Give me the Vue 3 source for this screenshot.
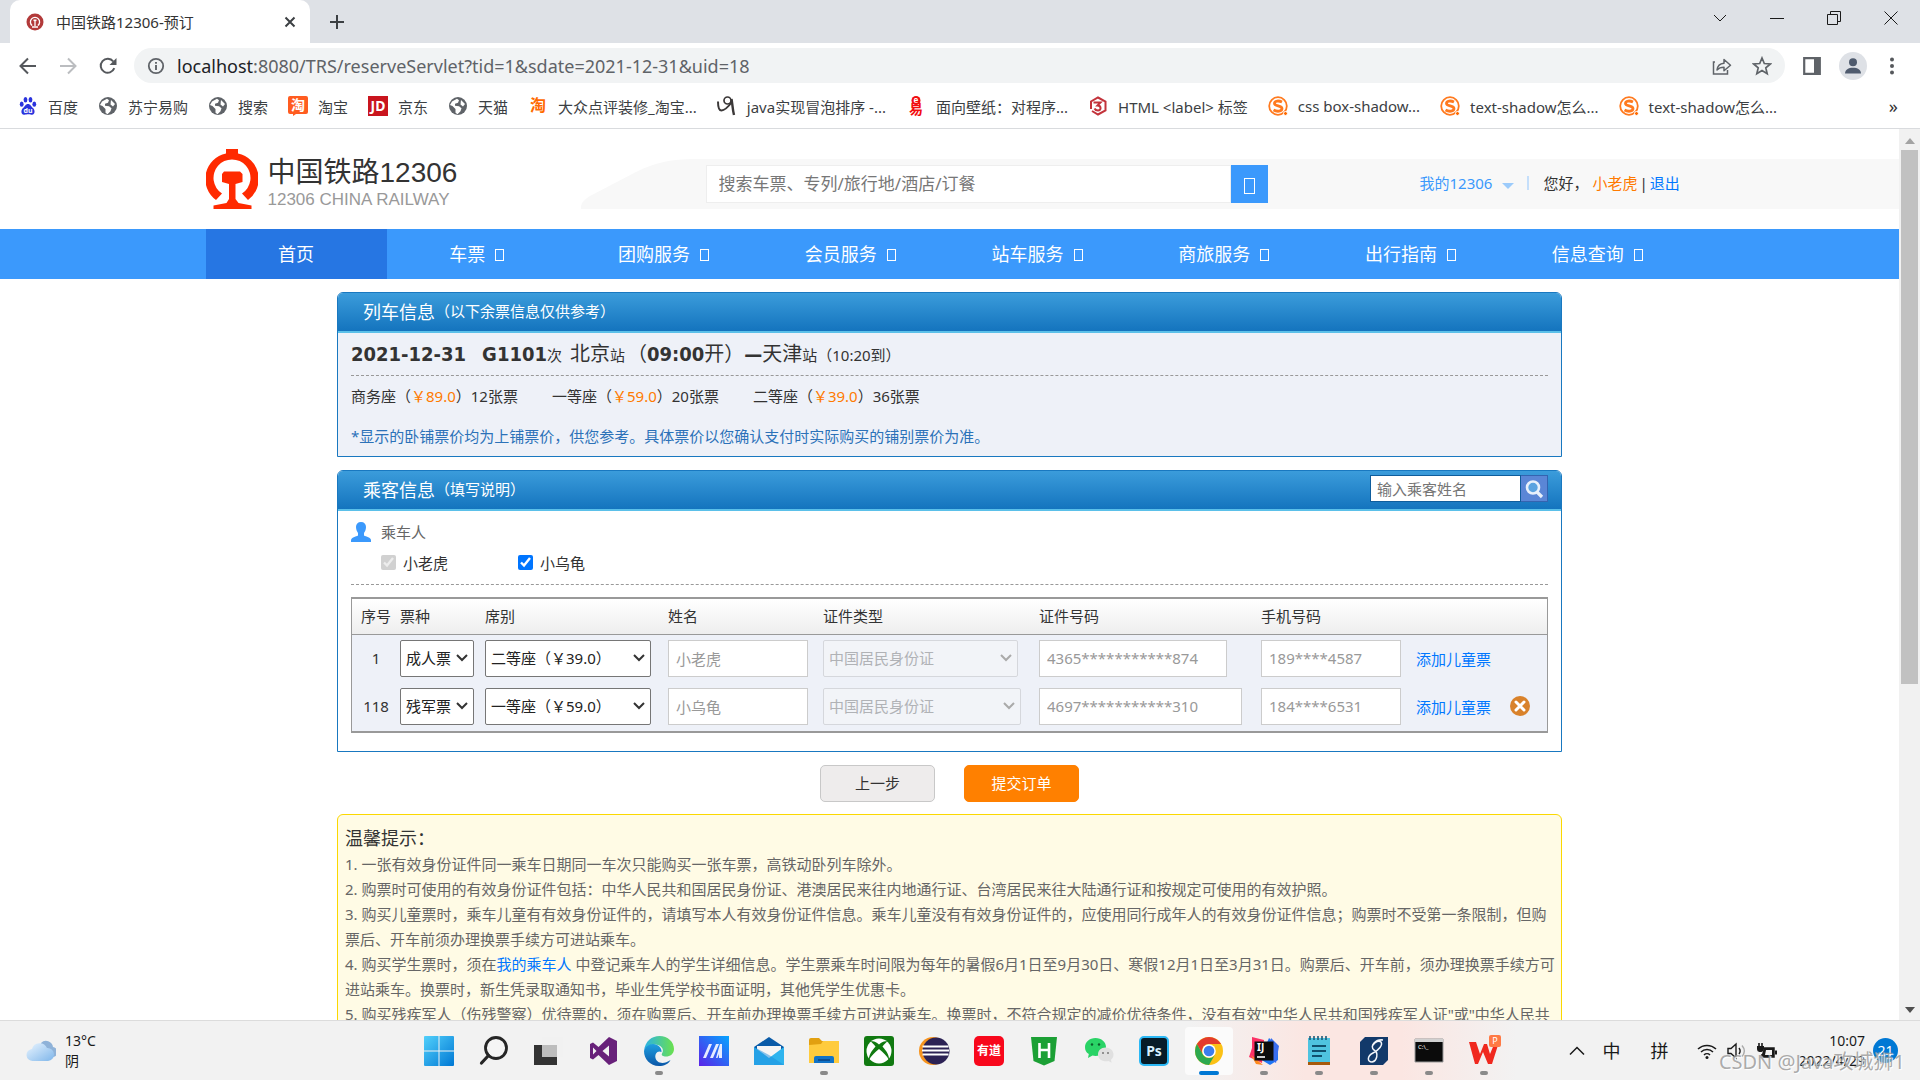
<template>
  <div class="screen">
    <!-- browser -->
    <header class="chrome">
      <div class="tab-strip">
        <div class="tab">
          <svg class="favicon" viewBox="0 0 18 18">
            <circle cx="9" cy="9" r="8.5" fill="#b23a3a" />
            <path d="M6.2 12.6A4.6 4.6 0 1 1 11.8 12.6M9 7v6M6 14h6" fill="none" stroke="#fff" stroke-width="1.3" />
            <path d="M7.5 6.5h3v1.6h-3z" fill="#fff" />
          </svg>
          <span class="tab-title">中国铁路12306-预订</span>
          <button class="plain" aria-label="关闭标签页">
            <svg width="12" height="12" viewBox="0 0 12 12"><path d="M1.5 1.5l9 9M10.5 1.5l-9 9" stroke="#3c4043" stroke-width="2" /></svg>
          </button>
        </div>
        <button class="plain new-tab" aria-label="新标签页">
          <svg width="16" height="16" viewBox="0 0 16 16"><path d="M8 1v14M1 8h14" stroke="#3c4043" stroke-width="2" /></svg>
        </button>
        <div class="window-buttons">
          <button class="plain" aria-label="搜索标签页"><svg width="14" height="14" viewBox="0 0 14 14"><path d="M1 4l6 6 6-6" class="thin" /></svg></button>
          <button class="plain" aria-label="最小化"><svg width="14" height="14" viewBox="0 0 14 14"><path d="M0 7.5h14" class="thin" /></svg></button>
          <button class="plain" aria-label="还原"><svg width="14" height="14" viewBox="0 0 14 14"><path d="M.5 3.5h10v10H.5zM3.5 3.5v-3h10v10h-3" class="thin" /></svg></button>
          <button class="plain" aria-label="关闭"><svg width="14" height="14" viewBox="0 0 14 14"><path d="M.5.5l13 13M13.5.5l-13 13" class="thin" /></svg></button>
        </div>
      </div>

      <div class="toolbar">
        <div class="nav-buttons">
          <button class="plain" aria-label="后退"><svg width="18" height="18" viewBox="0 0 18 18"><path d="M17 9H2M9 1.5L1.5 9 9 16.5" fill="none" stroke="#55585c" stroke-width="2" /></svg></button>
          <button class="plain" aria-label="前进"><svg width="18" height="18" viewBox="0 0 18 18"><path d="M1 9h15M9 1.5L16.5 9 9 16.5" fill="none" stroke="#bbbdc0" stroke-width="2" /></svg></button>
          <button class="plain" aria-label="重新加载">
            <svg width="18" height="18" viewBox="0 0 18 18">
              <path d="M15.3 11.2A7 7 0 1 1 14.3 4.5" fill="none" stroke="#55585c" stroke-width="2" />
              <path d="M17.5 1v7h-7z" fill="#55585c" />
            </svg>
          </button>
        </div>
        <div class="address">
          <svg width="18" height="18" viewBox="0 0 18 18">
            <circle cx="9" cy="9" r="7.2" fill="none" stroke="#5f6368" stroke-width="1.8" />
            <path d="M9 8v5M9 5v1.8" stroke="#5f6368" stroke-width="1.9" />
          </svg>
          <span class="url"><b>localhost</b>:8080/TRS/reserveServlet?tid=1&amp;sdate=2021-12-31&amp;uid=18</span>
          <svg class="share" width="20" height="20" viewBox="0 0 20 20">
            <path d="M3 6H1.5v12h14v-4" fill="none" stroke="#5f6368" stroke-width="1.5" />
            <path d="M5 14c.5-4 3-6.500 7-6.800V3.500l6.500 5.800-6.500 5.500v-3.500c-3 0-5.200.7-7 2.700z" fill="none" stroke="#5f6368" stroke-width="1.5" stroke-linejoin="round" />
          </svg>
          <svg width="20" height="20" viewBox="0 0 20 20">
            <path d="M10 2l2.300 5.500 6 .5-4.500 3.900 1.400 5.900L10 14.600l-5.200 3.200 1.400-5.900L1.700 8l6-.5z" fill="none" stroke="#5f6368" stroke-width="1.7" />
          </svg>
        </div>
        <svg width="18" height="18" viewBox="0 0 18 18"><path d="M1.2 1.2h15.6v15.6H1.2z" fill="#fff" stroke="#5f6368" stroke-width="2.2" /><path d="M11 1h6v16h-6z" fill="#5f6368" /></svg>
        <svg class="avatar" width="28" height="28" viewBox="0 0 28 28"><circle cx="14" cy="14" r="14" fill="#dee1e6" /><circle cx="14" cy="10.2" r="4" fill="#4f5b6e" /><path d="M6 21.500c0-4 3.500-5.800 8-5.800s8 1.800 8 5.800z" fill="#4f5b6e" /></svg>
        <svg class="dots" width="6" height="18" viewBox="0 0 6 18"><g fill="#55585c"><circle cx="3" cy="2.500" r="2" /><circle cx="3" cy="9" r="2" /><circle cx="3" cy="15.500" r="2" /></g></svg>
      </div>

      <nav class="bookmarks">
        <a v-for="(b, i) in bookmarks" :key="i" href="#">
          <svg width="20" height="20" viewBox="0 0 20 20">
            <g v-if="b.icon === 'baidu'" fill="#2a33dd">
              <ellipse cx="3.7" cy="8.2" rx="1.9" ry="2.6" /><ellipse cx="7.5" cy="3.7" rx="1.9" ry="2.7" />
              <ellipse cx="12.5" cy="3.7" rx="1.9" ry="2.7" /><ellipse cx="16.3" cy="8.2" rx="1.9" ry="2.6" />
              <path d="M10 8c2.500 0 3 2.500 5 4s2.500 6.500-1 6.700c-2 .1-2.500-.4-4-.4s-2 .5-4 .4C2.500 18.500 3 13.500 5 12s2.500-4 5-4z" />
              <text x="10" y="16.500" font-size="7" font-weight="bold" text-anchor="middle" fill="#fff">du</text>
            </g>
            <g v-else-if="b.icon === 'globe'">
              <circle cx="10" cy="10" r="9" fill="#5f6368" />
              <path d="M4 5.500l5-2.800 2 1.600-1 2.500-3 1v2l4 .5 2.500 2-1 3-3 3-2-1.500V13L4.500 10 2 9z" fill="#fff" />
              <path d="M13 4l4 4-2 2.500-2.500-2z" fill="#fff" />
            </g>
            <g v-else-if="b.icon === 'taobao'">
              <path d="M2 0h16a2 2 0 0 1 2 2v14a2 2 0 0 1-2 2H8l-3 2v-2H2a2 2 0 0 1-2-2V2a2 2 0 0 1 2-2z" fill="#ff5c20" />
              <text x="10" y="14" font-size="14" font-weight="bold" text-anchor="middle" fill="#fff">淘</text>
            </g>
            <g v-else-if="b.icon === 'jd'">
              <path d="M0 0h20v20H0z" fill="#c9151e" />
              <text x="10" y="15" font-size="14" font-weight="bold" text-anchor="middle" fill="#fff">JD</text>
            </g>
            <text v-else-if="b.icon === 'tao'" x="10" y="15" font-size="16" font-weight="bold" text-anchor="middle" fill="#ff6a00">淘</text>
            <g v-else-if="b.icon === 'java'" fill="none" stroke="#3b3838">
              <circle cx="10.5" cy="4.5" r="3.5" stroke-width="1.7" />
              <path d="M1 5.500c0 6 1 9 3.500 9 3.500 0 7-4 10.500-8.500" stroke-width="2" />
              <path d="M14.500 3c1 5 1 10 2.500 16" stroke-width="2.400" />
            </g>
            <g v-else-if="b.icon === 'yi'">
              <circle cx="10" cy="4.500" r="4.500" fill="#f20d0d" />
              <text x="10" y="7" font-size="8" font-weight="bold" text-anchor="middle" fill="#fff">e</text>
              <text x="10" y="18" font-size="14" font-weight="bold" text-anchor="middle" fill="#f20d0d">易</text>
            </g>
            <g v-else-if="b.icon === 'w3'" fill="none" stroke="#c3333b" stroke-width="2">
              <path d="M3 13V5.500l7-4 7.500 4v9l-7.500 4-6-3.500" />
              <path d="M5.500 6.500h7l-3 3c4 0 4 5 .5 5-2 0-3-1-3.500-2" />
            </g>
            <g v-else>
              <circle cx="10" cy="10" r="8.800" fill="none" stroke="#ff7a1f" stroke-width="1.800" />
              <path d="M14 6C11 4.500 6.500 4.500 6.500 7.500s7.500 1.800 7.500 5-5 3.500-8.500 1.500" fill="none" stroke="#ff7a1f" stroke-width="2.800" />
              <circle cx="17.500" cy="17.500" r="2" fill="#ff6a00" stroke="#fff" />
            </g>
          </svg>
          <span>{{ b.text }}</span>
        </a>
        <button class="plain more" aria-label="更多书签">»</button>
      </nav>
    </header>

    <!-- web page -->
    <div class="viewport">
      <div class="page">
        <div class="site-header">
          <div class="logo">
            <svg width="52" height="60" viewBox="0 0 52 60">
              <path d="M20 0h12v4.500A26 26 0 0 1 42 51l-6-6.500A18.500 18.500 0 1 0 16 44.500L10 51A26 26 0 0 1 20 4.500z" fill="#ff2a00" />
              <path d="M18 22.500h16l2.500 2.500v8l-7 2v15l3 4 13 2.500V60h-38v-3.500l13-2.500 2.500-4V35l-7-2v-8z" fill="#ff2a00" />
            </svg>
            <div>
              <div class="logo-cn">中国铁路12306</div>
              <div class="logo-en">12306 CHINA RAILWAY</div>
            </div>
          </div>
          <div class="header-band">
            <svg class="train-nose" width="125" height="50" viewBox="0 0 125 50"><path d="M0 50v-2c0-4 4-8 9-11L55 13C75 3 92 0 112 0h13v50z" fill="#f8f8f8" /></svg>
            <form class="band-fill" @submit.prevent>
              <input v-model="keyword" class="site-search" aria-label="搜索" placeholder="搜索车票、专列/旅行地/酒店/订餐" />
              <button class="site-search-btn" aria-label="搜索"><i class="tofu tofu-big"></i></button>
              <div class="user">
                <a class="my" href="#">我的12306<i class="caret"></i></a>
                <span class="bar"></span>
                <span>您好，</span><a class="name" href="#">小老虎</a><span class="sep">|</span><a class="logout" href="#">退出</a>
              </div>
            </form>
          </div>
        </div>

        <nav class="main-nav">
          <ul>
            <li class="active"><a href="#">首页</a></li>
            <li v-for="m in menus" :key="m"><a href="#">{{ m }}<i class="tofu"></i></a></li>
          </ul>
        </nav>

        <main>
          <section class="panel train">
            <h2>列车信息<small>（以下余票信息仅供参考）</small></h2>
            <div class="panel-body">
              <p class="train-line">
                <strong class="date">2021-12-31</strong><strong>G1101</strong>次<em class="from">北京</em>站<em class="depart">（</em><strong>09:00</strong><em>开）</em><strong>—</strong><em>天津</em>站（10:20到）
              </p>
              <p class="seats">
                <span v-for="s in seats" :key="s.name">{{ s.name }}（<span class="price">￥{{ s.price }}</span>）{{ s.left }}张票</span>
              </p>
              <p class="note">*显示的卧铺票价均为上铺票价，供您参考。具体票价以您确认支付时实际购买的铺别票价为准。</p>
            </div>
          </section>

          <section class="panel">
            <h2>
              乘客信息<small>（填写说明）</small>
              <span class="passenger-search">
                <input v-model="passengerName" aria-label="乘客姓名" placeholder="输入乘客姓名" />
                <button aria-label="查找乘客">
                  <svg width="20" height="20" viewBox="0 0 20 20"><circle cx="9" cy="8.500" r="6" fill="#5ba3e0" stroke="#e8f0fb" stroke-width="2.600" /><path d="M13 13l5 5" stroke="#e8f0fb" stroke-width="3.200" /></svg>
                </button>
              </span>
            </h2>
            <div class="panel-body">
              <div class="rider-title">
                <svg width="20" height="20" viewBox="0 0 20 20"><path d="M10 0c3.200 0 5 2 5 5 0 2.500-1 4.500-2 6v2.500c2 1.300 7 1.500 7 5V20H0v-1.500c0-3.500 5-3.700 7-5V11C6 9.500 5 7.500 5 5c0-3 1.800-5 5-5z" fill="#3b99fc" /></svg>
                乘车人
              </div>
              <div class="riders">
                <label><input type="checkbox" checked disabled />小老虎</label>
                <label><input v-model="turtle" type="checkbox" />小乌龟</label>
              </div>

              <table>
                <thead>
                  <tr>
                    <th class="c-no">序号</th>
                    <th class="c-ticket">票种</th>
                    <th class="c-seat">席别</th>
                    <th class="c-name">姓名</th>
                    <th class="c-type">证件类型</th>
                    <th class="c-id">证件号码</th>
                    <th class="c-phone">手机号码</th>
                    <th class="c-add"></th>
                    <th></th>
                  </tr>
                </thead>
                <tbody>
                  <tr v-for="r in rows" :key="r.no" :class="{ wide: r.removable }">
                    <td class="c-no">{{ r.no }}</td>
                    <td><select v-model="r.ticket" class="s-ticket" aria-label="票种"><option>成人票</option><option>残军票</option></select></td>
                    <td><select v-model="r.seat" class="s-seat" aria-label="席别"><option>一等座（￥59.0）</option><option>二等座（￥39.0）</option></select></td>
                    <td><input class="i-short" aria-label="姓名" :value="r.name" readonly /></td>
                    <td><select class="s-type" aria-label="证件类型" disabled><option>中国居民身份证</option></select></td>
                    <td><input class="i-id" aria-label="证件号码" :value="r.id" readonly /></td>
                    <td><input class="i-short" aria-label="手机号码" :value="r.phone" readonly /></td>
                    <td><a href="#">添加儿童票</a></td>
                    <td>
                      <button v-if="r.removable" class="plain remove" aria-label="删除">
                        <svg width="20" height="20" viewBox="0 0 20 20"><circle cx="10" cy="10" r="10" fill="#d9822b" /><path d="M6 6l8 8M14 6l-8 8" stroke="#fff" stroke-width="3" stroke-linecap="round" /></svg>
                      </button>
                    </td>
                  </tr>
                </tbody>
              </table>
            </div>
          </section>

          <div class="actions">
            <button class="prev">上一步</button>
            <button class="submit">提交订单</button>
          </div>

          <section class="tips">
            <h3>温馨提示：</h3>
            <p>1. 一张有效身份证件同一乘车日期同一车次只能购买一张车票，高铁动卧列车除外。</p>
            <p>2. 购票时可使用的有效身份证件包括：中华人民共和国居民身份证、港澳居民来往内地通行证、台湾居民来往大陆通行证和按规定可使用的有效护照。</p>
            <p>3. 购买儿童票时，乘车儿童有有效身份证件的，请填写本人有效身份证件信息。乘车儿童没有有效身份证件的，应使用同行成年人的有效身份证件信息；购票时不受第一条限制，但购票后、开车前须办理换票手续方可进站乘车。</p>
            <p>4. 购买学生票时，须在<a href="#">我的乘车人</a> 中登记乘车人的学生详细信息。学生票乘车时间限为每年的暑假6月1日至9月30日、寒假12月1日至3月31日。购票后、开车前，须办理换票手续方可进站乘车。换票时，新生凭录取通知书，毕业生凭学校书面证明，其他凭学生优惠卡。</p>
            <p>5. 购买残疾军人（伤残警察）优待票的，须在购票后、开车前办理换票手续方可进站乘车。换票时，不符合规定的减价优待条件，没有有效"中华人民共和国残疾军人证"或"中华人民共</p>
          </section>
        </main>
      </div>
      <div class="scrollbar">
        <i class="up"></i>
        <i class="thumb"></i>
        <i class="down"></i>
      </div>
    </div>

    <!-- windows taskbar -->
    <footer class="taskbar">
      <div class="weather">
        <svg width="30" height="26" viewBox="0 0 30 26">
          <defs><linearGradient id="cloud" x1="0" y1="0" x2="1" y2="1"><stop offset="0" stop-color="#eaf5ff" /><stop offset="1" stop-color="#7fb6ea" /></linearGradient></defs>
          <path d="M15 5a7 7 0 0 1 12 4 5 5 0 0 1-1 10H15z" fill="#8fb2d8" />
          <path d="M7 23a6 6 0 0 1-1-12 8 8 0 0 1 15-1 6.500 6.500 0 0 1 1 13z" fill="url(#cloud)" />
        </svg>
        <div>13°C<br />阴</div>
      </div>

      <div class="apps">
        <button aria-label="开始">
          <svg viewBox="0 0 30 30"><defs><linearGradient id="win" x1="0" y1="0" x2="1" y2="1"><stop offset="0" stop-color="#52d0fb" /><stop offset="1" stop-color="#0078d4" /></linearGradient></defs><path d="M0 1a1 1 0 0 1 1-1h13.500v14.500H0zM15.500 0H29a1 1 0 0 1 1 1v13.500H15.500zM0 15.500h14.500V30H1a1 1 0 0 1-1-1zM15.500 15.500H30V29a1 1 0 0 1-1 1H15.500z" fill="url(#win)" /></svg>
        </button>
        <button aria-label="搜索">
          <svg viewBox="0 0 30 30"><circle cx="17" cy="12" r="10.500" fill="#f5f5f5" stroke="#262626" stroke-width="2.800" /><path d="M9.500 19.500L2.500 27" stroke="#262626" stroke-width="3.200" stroke-linecap="round" /></svg>
        </button>
        <button aria-label="任务视图">
          <svg viewBox="0 0 30 30"><path d="M0 9h23v20H0z" fill="#333" /><path d="M8 1h21v20H8z" fill="#f1f1f1" /><path d="M8 9h15v12H8z" fill="#bdbdbd" /></svg>
        </button>
        <button aria-label="Visual Studio">
          <svg viewBox="0 0 30 30"><path d="M20 1l8 4v20l-8 4L9.500 19 4 23.500 1 22V8l3-1.500L9.500 11zM4 11.500v7L7.500 15zM20 9.500L13.500 15l6.500 5.500z" fill="#68217a" fill-rule="evenodd" /></svg>
        </button>
        <button class="open" aria-label="Edge">
          <svg viewBox="0 0 30 30">
            <defs>
              <linearGradient id="edgeA" x1="0" y1="0" x2="1" y2="0"><stop offset="0" stop-color="#2ab1e8" /><stop offset="1" stop-color="#6be14d" /></linearGradient>
              <linearGradient id="edgeB" x1="0" y1="0" x2="0" y2="1"><stop offset="0" stop-color="#1f9fe0" /><stop offset="1" stop-color="#0b57a8" /></linearGradient>
            </defs>
            <path d="M0 15C1 5 8 0 15.500 0 24 0 30 6 30 13c0 5-4 7.500-8 7.500-3 0-5-1-4-3 3-5-2-9-7-9C5 8.500 1 12 0 15z" fill="url(#edgeA)" />
            <path d="M0 15c1-4 5-7 9-7 5 0 9 4 8.500 8-4-2-7 2-6 6 1 5 8 7 15 2-2 4-6.500 6-11.500 6C6 30 0 23 0 15z" fill="url(#edgeB)" />
          </svg>
        </button>
        <button aria-label="MyASUS">
          <svg viewBox="0 0 30 30"><defs><linearGradient id="asus" x1="0" y1="1" x2="1" y2="0"><stop offset="0" stop-color="#5b22e8" /><stop offset="1" stop-color="#05a5ff" /></linearGradient></defs><path d="M0 0h30v30H0z" fill="url(#asus)" /><path d="M4 22L10 8h3L7 22zM11 22l6-14h3l-6 14zM17 22l4-14h2v14h-3v-4l-1.500 4z" fill="#e6ecff" /></svg>
        </button>
        <button aria-label="邮件">
          <svg viewBox="0 0 30 30"><path d="M0 11L15 1l15 10v3H0z" fill="#0a5ba8" /><path d="M3 10h24v10H3z" fill="#f5f5f5" /><path d="M0 11l15 11 15-11v18H0z" fill="#2fb4ee" /><path d="M15 19L30 29H0V11z" fill="#1c8ede" opacity=".5" /></svg>
        </button>
        <button class="open" aria-label="文件资源管理器">
          <svg viewBox="0 0 30 30"><path d="M0 4a2 2 0 0 1 2-2h8l3 3h15v8H0z" fill="#e2a010" /><path d="M0 9l12-1 2-3h16v22H0z" fill="#ffcb3d" /><path d="M5 27v-5a2 2 0 0 1 2-2h16a2 2 0 0 1 2 2v5z" fill="#1173c7" /><path d="M9 23h12v2H9z" fill="#0b4f94" /></svg>
        </button>
        <button aria-label="Xbox">
          <svg viewBox="0 0 30 30"><rect width="30" height="30" rx="3" fill="#117a11" /><circle cx="15" cy="15" r="12.500" fill="#fff" /><path d="M6.500 5.500c3-1 6 .5 8.500 3 2.500-2.500 5.500-4 8.500-3 -1.500 1-3 2.500-5 5 4 4.500 7 9 6.500 13.500C23 20 19 16 15 13c-4 3-8 7-10 11C4.500 19.500 7.500 15 11.500 10.500c-2-2.500-3.500-4-5-5z" fill="#117a11" /></svg>
        </button>
        <button aria-label="Eclipse">
          <svg viewBox="0 0 30 30"><circle cx="14" cy="15" r="14" fill="#f7941e" /><circle cx="17" cy="15" r="13.500" fill="#2c2255" /><path d="M3.500 10.500h26M3 14.500h27M3.500 18.500h26" stroke="#fff" stroke-width="1.800" /></svg>
        </button>
        <button aria-label="有道">
          <svg viewBox="0 0 30 30"><rect width="30" height="30" rx="5" fill="#f8081c" /><text x="15" y="19" font-size="12" font-weight="bold" fill="#fff" text-anchor="middle">有道</text></svg>
        </button>
        <button aria-label="HBuilder">
          <svg viewBox="0 0 30 30"><path d="M2 1h26l-2.500 24L15 29.500 4.500 25z" fill="#1ca035" /><path d="M10.500 7v15M20 7v15M10.500 14h9.500" stroke="#fff" stroke-width="2.600" /></svg>
        </button>
        <button aria-label="微信">
          <svg viewBox="0 0 30 30"><path d="M11.500 2C17.500 2 22 6 22 11s-4.500 9-10.500 9l-3-.4L4 22l.8-4C2 16.500 1 14 1 11c0-5 4.500-9 10.500-9z" fill="#2ad366" /><circle cx="8" cy="8.500" r="1.200" fill="#0b5c2a" /><circle cx="15" cy="8.500" r="1.200" fill="#0b5c2a" /><path d="M21.500 11.500c4.500 0 8 3 8 7 0 2.500-1 4-2.500 5.200l.5 3-3-1.600c-6 1-10.500-2-10.500-6.600 0-4 3-7 7.500-7z" fill="#e0e0e0" /><circle cx="19" cy="17" r="1" fill="#777" /><circle cx="24" cy="17" r="1" fill="#777" /></svg>
        </button>
        <button aria-label="Photoshop">
          <svg viewBox="0 0 30 30"><rect x="1" y="1" width="28" height="28" rx="4" fill="#071c28" stroke="#2bb8f5" stroke-width="2" /><text x="15" y="20" font-size="14" font-weight="bold" fill="#d5efff" text-anchor="middle">Ps</text></svg>
        </button>
        <button class="current" aria-label="Chrome">
          <svg viewBox="0 0 30 30">
            <circle cx="15" cy="15" r="14" fill="#fbc116" />
            <path d="M2.900 8A14 14 0 0 1 27.100 8H15a7 7 0 0 0-6.100 10.500z" fill="#e33b2e" />
            <path d="M2.900 8A14 14 0 0 0 15 29l6.100-10.500a7 7 0 0 1-12.200 0z" fill="#2da94f" />
            <circle cx="15" cy="15" r="6.800" fill="#fff" /><circle cx="15" cy="15" r="5.300" fill="#3b7ded" />
          </svg>
        </button>
        <button class="open" aria-label="IntelliJ IDEA">
          <svg viewBox="0 0 30 30"><path d="M3 1l12 3-2 23-13-6 3-9z" fill="#fc3065" /><path d="M2 19l12 10-7-1z" fill="#ff8a1e" /><path d="M20 2l9 8v14l-8 5-10-6z" fill="#1f76f5" /><path d="M22 2l8 8-3 17-7-5z" fill="#3a6df0" /><path d="M5.500 5.500h19v19h-19z" fill="#0c0c0c" /><text x="8" y="15" font-size="10" font-weight="bold" fill="#fff">IJ</text><path d="M8 21h8" stroke="#fff" stroke-width="1.600" /></svg>
        </button>
        <button class="open" aria-label="记事本">
          <svg viewBox="0 0 30 30"><path d="M4 2h22v25H4z" fill="#4fc3e0" /><path d="M4 26h22v3H4z" fill="#a8590b" /><path d="M6 0v4M10 0v4M14 0v4M18 0v4M22 0v4" stroke="#1b5b78" stroke-width="1.600" /><path d="M8 10h14M8 15h14M8 20h10" stroke="#10506e" stroke-width="1.800" /></svg>
        </button>
        <button class="open" aria-label="数据库工具">
          <svg viewBox="0 0 30 30"><path d="M6 1h23v23l-5 5H1V6z" fill="#12396a" /><path d="M24 4c-7-1-14 6-9 10 5 3 3 11-2 12-5 0-5-6 1-9 6-3 10-8 8-11-2-2-6 0-8 3" fill="none" stroke="#f3f6fb" stroke-width="1.500" /></svg>
        </button>
        <button class="open" aria-label="命令提示符">
          <svg viewBox="0 0 30 30"><path d="M1 3h28v23H1z" fill="#0b0b0b" stroke="#9a9a9a" /><path d="M1 3h28v3H1z" fill="#d0d0d0" /><text x="4" y="13" font-size="6" fill="#fff">C:\_</text></svg>
        </button>
        <button class="open" aria-label="WPS">
          <svg viewBox="0 0 30 30"><path d="M0 6h7l4 12 4-10h3l3 10 5-12h4l-7 22h-4l-5-12-5 12H6z" fill="#f0281e" /><rect x="20" y="-1" width="12" height="12" rx="2" fill="#ff7a45" /><text x="26" y="8" font-size="9" fill="#fff" text-anchor="middle">P</text></svg>
        </button>
      </div>

      <div class="tray">
        <svg width="16" height="16" viewBox="0 0 16 16"><path d="M1 11.500l7-7 7 7" fill="none" stroke="#1a1a1a" stroke-width="1.500" /></svg>
        <span class="ime">中</span>
        <span class="ime">拼</span>
        <div class="system">
          <svg width="20" height="18" viewBox="0 0 20 18"><g fill="none" stroke="#1a1a1a" stroke-width="1.500"><path d="M1 7a13 13 0 0 1 18 0M4 10a8.500 8.500 0 0 1 12 0M7 13a4.300 4.300 0 0 1 6 0" /></g><circle cx="10" cy="15.500" r="1.500" fill="#1a1a1a" /></svg>
          <svg width="20" height="18" viewBox="0 0 20 18"><path d="M1 6.500h3L9 2v14l-5-4.500H1zM12 6c1.500 2 1.500 4 0 6" fill="none" stroke="#1a1a1a" stroke-width="1.400" /><path d="M15 3.500c3 3.500 3 7.500 0 11" fill="none" stroke="#aaa" stroke-width="1.400" /></svg>
          <svg width="20" height="18" viewBox="0 0 20 18"><path d="M7 6h10v9H5v-3" fill="#1a1a1a" stroke="#1a1a1a" stroke-width="1.500" /><path d="M9 8h6v5H8z" fill="#f2f2f2" /><path d="M18 8.500h2v4h-2zM0 4h7v3a3 3 0 0 1-2.500 3H2.500A3 3 0 0 1 0 7zM1.200 1h1.600v3H1.200zM4.200 1h1.600v3H4.200z" fill="#1a1a1a" /></svg>
        </div>
        <div class="clock">10:07<br />2022/4/29</div>
        <span class="badge">21</span>
        <span class="watermark">CSDN @Java攻城狮1</span>
      </div>
    </footer>
  </div>
</template>

<script setup>
import { ref } from 'vue'

const keyword = ref('')
const passengerName = ref('')
const turtle = ref(true)

const bookmarks = [
  { icon: 'baidu', text: '百度' },
  { icon: 'globe', text: '苏宁易购' },
  { icon: 'globe', text: '搜索' },
  { icon: 'taobao', text: '淘宝' },
  { icon: 'jd', text: '京东' },
  { icon: 'globe', text: '天猫' },
  { icon: 'tao', text: '大众点评装修_淘宝...' },
  { icon: 'java', text: 'java实现冒泡排序 -...' },
  { icon: 'yi', text: '面向壁纸：对程序...' },
  { icon: 'w3', text: 'HTML <label> 标签' },
  { icon: 'so', text: 'css box-shadow...' },
  { icon: 'so', text: 'text-shadow怎么...' },
  { icon: 'so', text: 'text-shadow怎么...' }
]

const menus = ['车票', '团购服务', '会员服务', '站车服务', '商旅服务', '出行指南', '信息查询']

const seats = [
  { name: '商务座', price: '89.0', left: 12 },
  { name: '一等座', price: '59.0', left: 20 },
  { name: '二等座', price: '39.0', left: 36 }
]

const rows = ref([
  { no: 1, ticket: '成人票', seat: '二等座（￥39.0）', name: '小老虎', id: '4365***********874', phone: '189****4587', removable: false },
  { no: 118, ticket: '残军票', seat: '一等座（￥59.0）', name: '小乌龟', id: '4697***********310', phone: '184****6531', removable: true }
])
</script>

<style>
body {
  overflow: hidden;
}
</style>

<style scoped>
.screen {
  display: flex;
  flex-direction: column;
  height: 100vh;
  font-family: "Noto Sans", "Noto Sans CJK SC", sans-serif;
  font-size: 15px;
  color: #333;
  text-spacing-trim: space-all;
}

.screen * {
  box-sizing: border-box;
}

svg {
  display: block;
  flex: none;
}

a {
  color: #0077ff;
  text-decoration: none;
}

button,
input,
select {
  font: inherit;
  margin: 0;
}

.plain {
  padding: 0;
  border: none;
  background: none;
  color: inherit;
}

/* browser chrome */
.chrome {
  flex: none;
  background: #fff;
  border-bottom: 1px solid #d9dbde;
}

.tab-strip {
  display: flex;
  height: 43px;
  padding-left: 10px;
  background: #dee1e6;
}

.tab {
  display: flex;
  align-items: center;
  gap: 12px;
  width: 300px;
  padding: 0 14px 0 16px;
  border-radius: 10px 10px 0 0;
  background: #fff;
}

.favicon {
  width: 18px;
  height: 18px;
}

.tab-title {
  flex: 1;
}

.new-tab {
  margin-left: 19px;
}

.window-buttons {
  display: flex;
  gap: 43px;
  height: 36px;
  margin-left: auto;
  padding-right: 22px;
}

.thin {
  fill: none;
  stroke: #1a1a1a;
}

.toolbar {
  display: flex;
  align-items: center;
  height: 45px;
  padding: 0 25px 0 19px;
}

.nav-buttons {
  display: flex;
  gap: 22px;
  margin-right: 17px;
}

.address {
  display: flex;
  flex: 1;
  align-items: center;
  gap: 12px;
  height: 35px;
  margin-right: 18px;
  padding: 0 13px;
  border-radius: 18px;
  background: #f1f3f4;
}

.url {
  flex: 1;
  font-size: 18px;
  color: #5f6368;
}

.url b {
  font-weight: normal;
  color: #202124;
}

.share {
  margin-right: 8px;
}

.avatar {
  margin: 0 22px 0 18px;
}

.bookmarks {
  display: flex;
  align-items: center;
  gap: 20px;
  height: 40px;
  padding: 0 22px 4px 18px;
}

.bookmarks a {
  display: flex;
  align-items: center;
  gap: 10px;
  color: #3c4043;
  white-space: nowrap;
}

.bookmarks svg {
  overflow: visible;
}

.more {
  margin-left: auto;
  font-size: 18px;
}

/* page */
.viewport {
  display: flex;
  flex: 1;
  min-height: 0;
  background: #fff;
}

.page {
  flex: 1;
  overflow: hidden;
}

.site-header {
  display: flex;
  height: 100px;
  padding: 20px 0 0 calc((100% - 1488px) / 2);
}

.logo {
  display: flex;
  gap: 10px;
  width: 375px;
  white-space: nowrap;
}

.logo-cn {
  margin-top: 7px;
  font: 28px/34px "Liberation Sans", "Noto Sans CJK SC", sans-serif;
  color: #333;
}

.logo-en {
  font: 17px/20px "Liberation Sans", sans-serif;
  color: #999;
}

.header-band {
  display: flex;
  flex: 1;
  padding-top: 10px;
}

.band-fill {
  display: flex;
  flex: 1;
  align-items: center;
  height: 50px;
  background: #f8f8f8;
}

.site-search {
  width: 525px;
  height: 38px;
  padding: 0 12px 2px;
  border: 1px solid #eee;
  font-size: 17px;
}

.site-search::placeholder {
  color: #777;
}

.site-search-btn {
  width: 37px;
  height: 38px;
  padding: 0;
  border: none;
  background: #3b99fc;
}

.tofu {
  display: inline-block;
  width: 9px;
  height: 12px;
  margin-left: 10px;
  border: 1px solid #fff;
}

.tofu-big {
  width: 11px;
  height: 16px;
  margin: 0;
  vertical-align: middle;
}

.user {
  display: flex;
  align-items: center;
  margin-left: 152px;
  padding-bottom: 3px;
}

.my {
  color: #3b99fc;
}

.caret {
  display: inline-block;
  margin: 0 13px 0 10px;
  border: 6px solid transparent;
  border-top-color: #9ccbfb;
  border-bottom: 0;
}

.bar {
  width: 2px;
  height: 14px;
  margin-right: 14px;
  background: #c5dffb;
}

.name {
  margin-left: 4px;
  color: #ff7a00;
}

.sep {
  margin: 0 2px;
}

.logout {
  color: #0077ff;
}

.main-nav {
  background: #3b99fc;
}

.main-nav ul {
  display: flex;
  width: 1488px;
  margin: 0 auto;
  padding: 0;
  list-style: none;
  font-size: 18px;
  line-height: 50px;
  text-align: center;
}

.main-nav li {
  flex: 1;
  padding-right: 6px;
}

.main-nav .active {
  flex: none;
  width: 181px;
  padding: 0;
  background: #2676e3;
}

.main-nav a {
  display: block;
  color: #fff;
}

main {
  width: 1225px;
  margin: 13px auto 0;
}

.panel {
  margin-bottom: 13px;
  border: 1px solid #1978c0;
  border-radius: 6px 6px 0 0;
}

.panel h2 {
  display: flex;
  align-items: center;
  height: 40px;
  margin: 0;
  padding: 0 13px 3px 25px;
  border-bottom: 2px solid #5bc0e9;
  border-radius: 5px 5px 0 0;
  background: linear-gradient(#3b9cdb, #1474be);
  color: #fff;
  font-size: 18px;
  font-weight: normal;
}

.panel h2 small {
  font-size: 15px;
}

.panel p {
  margin: 0;
}

.panel-body {
  padding: 0 13px;
}

.train .panel-body {
  background: #eef1f8;
}

.train-line {
  height: 43px;
  border-bottom: 1px dashed #999;
  line-height: 42px;
}

.train-line strong {
  font: bold 20px "DejaVu Sans Condensed", "DejaVu Sans", sans-serif;
}

.train-line em {
  font-size: 20px;
  font-style: normal;
}

.train-line .date {
  margin-right: 16px;
}

.train-line .from {
  margin-left: 8px;
}

.train-line .depart {
  margin-left: 2px;
}

.seats {
  display: flex;
  gap: 34px;
  line-height: 40px;
}

.price {
  color: #ff7a00;
}

.note {
  line-height: 40px;
  color: #2c72b8;
}

.passenger-search {
  display: flex;
  margin-left: auto;
}

.passenger-search input {
  width: 151px;
  height: 27px;
  padding: 0 6px;
  border: 1px solid #0f5d9c;
  font-size: 15px;
}

.passenger-search button {
  width: 27px;
  height: 27px;
  padding: 3px;
  border: 1px solid #3464b0;
  border-left: none;
  background: #5a86d6;
}

.rider-title {
  display: flex;
  align-items: center;
  gap: 10px;
  height: 41px;
  color: #666;
}

.riders {
  display: flex;
  gap: 70px;
  height: 33px;
  padding-left: 30px;
  border-bottom: 1px dashed #999;
}

.riders label {
  display: flex;
  align-items: center;
  gap: 7px;
  height: 20px;
}

.riders input {
  width: 15px;
  height: 15px;
}

table {
  width: 100%;
  margin: 12px 0 18px;
  border: solid #999;
  border-width: 2px 1px;
  border-spacing: 0;
  table-layout: fixed;
  background: #eef1f8;
}

th,
td {
  height: 48px;
  padding: 0 0 2px;
  font-weight: normal;
  text-align: left;
}

th {
  height: 36px;
  border-bottom: 1px solid #999;
  background: linear-gradient(#fff, #eee);
}

.c-no {
  width: 48px;
  text-align: center;
}

.c-ticket {
  width: 85px;
}

.c-seat {
  width: 183px;
}

.c-name {
  width: 155px;
}

.c-type {
  width: 216px;
}

.c-id {
  width: 222px;
}

.c-phone {
  width: 155px;
}

.c-add {
  width: 94px;
}

td select,
td input {
  display: block;
  height: 37px;
  border: 1px solid #ccc;
  background: #fff;
  color: #999;
}

td input {
  padding: 0 7px;
}

td select {
  appearance: none;
  padding: 0 5px;
  border-color: #767676;
  border-radius: 2px;
  background: #fff url("data:image/svg+xml,%3Csvg xmlns='http://www.w3.org/2000/svg' width='12' height='8'%3E%3Cpath d='M1 1l5 5 5-5' fill='none' stroke='%23333' stroke-width='2'/%3E%3C/svg%3E") no-repeat right 5px center;
  color: #222;
}

td select:disabled {
  border-color: #d5d7dc;
  background-color: #f2f4f8;
  background-image: url("data:image/svg+xml,%3Csvg xmlns='http://www.w3.org/2000/svg' width='12' height='8'%3E%3Cpath d='M1 1l5 5 5-5' fill='none' stroke='%23aaa' stroke-width='2'/%3E%3C/svg%3E");
  color: #b0b2b6;
  opacity: 1;
}

.s-ticket {
  width: 74px;
}

.s-seat {
  width: 166px;
}

.s-type {
  width: 195px;
}

.i-short {
  width: 140px;
}

.i-id {
  width: 188px;
}

.wide .s-type {
  width: 198px;
}

.wide .i-id {
  width: 203px;
}

.remove {
  display: block;
}

.actions {
  display: flex;
  justify-content: center;
  gap: 29px;
  margin-bottom: 12px;
}

.actions button {
  width: 115px;
  height: 37px;
  padding: 0 0 2px;
  border: 1px solid #c8c8c8;
  border-radius: 5px;
  background: #eeecec;
  color: #333;
}

.actions .submit {
  border-color: #ff8000;
  background: #ff8000;
  color: #fff;
}

.tips {
  padding: 9px 4px 10px 7px;
  border: 1px solid #fbd800;
  border-radius: 6px;
  background: #fffbe5;
  color: #666;
  line-height: 25px;
}

.tips h3 {
  margin: 0;
  font-size: 18px;
  font-weight: normal;
  line-height: 28px;
  color: #333;
}

.tips p {
  margin: 0;
  line-break: anywhere;
}

.scrollbar {
  display: flex;
  flex-direction: column;
  align-items: center;
  width: 21px;
  padding: 9px 0 7px;
  background: #f1f1f1;
}

.thumb {
  width: 17px;
  height: 61%;
  margin-top: 6px;
  background: #c1c1c1;
}

.up,
.down {
  border: 5px solid transparent;
}

.up {
  border-top: 0;
  border-bottom: 6px solid #a3a3a3;
}

.down {
  margin-top: auto;
  border-top: 6px solid #505050;
  border-bottom: 0;
}

/* taskbar */
.taskbar {
  display: grid;
  grid-template-columns: 1fr auto 1fr;
  flex: none;
  height: 60px;
  border-top: 1px solid #dcdcdc;
  background: linear-gradient(90deg, #f2f2f2 62%, #fbe6e2 68%, #fbe6e2 73%, #f2f2f2 79%);
  color: #1a1a1a;
  font-size: 14px;
  line-height: 20px;
}

.weather {
  display: flex;
  align-items: center;
  gap: 9px;
  padding-left: 26px;
}

.apps {
  display: flex;
  align-items: center;
  gap: 7px;
  padding-left: 3px;
}

.apps button {
  position: relative;
  width: 48px;
  height: 48px;
  padding: 9px;
  border: none;
  border-radius: 4px;
  background: none;
}

.apps svg {
  width: 30px;
  height: 30px;
  overflow: visible;
}

.apps .current {
  background: #fbfbfb;
}

.open::after,
.current::after {
  content: "";
  position: absolute;
  bottom: 0;
  left: 20px;
  width: 8px;
  height: 4px;
  border-radius: 2px;
  background: #8a8a8a;
}

.current::after {
  left: 14px;
  width: 20px;
  background: #0078d4;
}

.tray {
  position: relative;
  display: flex;
  align-items: center;
  justify-content: flex-end;
  padding-right: 22px;
}

.ime {
  margin-left: 18px;
  font-size: 18px;
}

.ime + .ime {
  margin-left: 30px;
}

.system {
  display: flex;
  gap: 10px;
  margin: 0 22px 0 28px;
}

.clock {
  text-align: right;
}

.badge {
  width: 25px;
  height: 25px;
  margin-left: 8px;
  border-radius: 50%;
  background: #0078d4;
  color: #fff;
  line-height: 25px;
  text-align: center;
}

.watermark {
  position: absolute;
  right: 15px;
  bottom: 6px;
  font-size: 20px;
  line-height: 24px;
  color: rgba(150, 150, 150, 0.8);
  text-shadow: 1px 1px 1px #fff;
  white-space: nowrap;
}
</style>
